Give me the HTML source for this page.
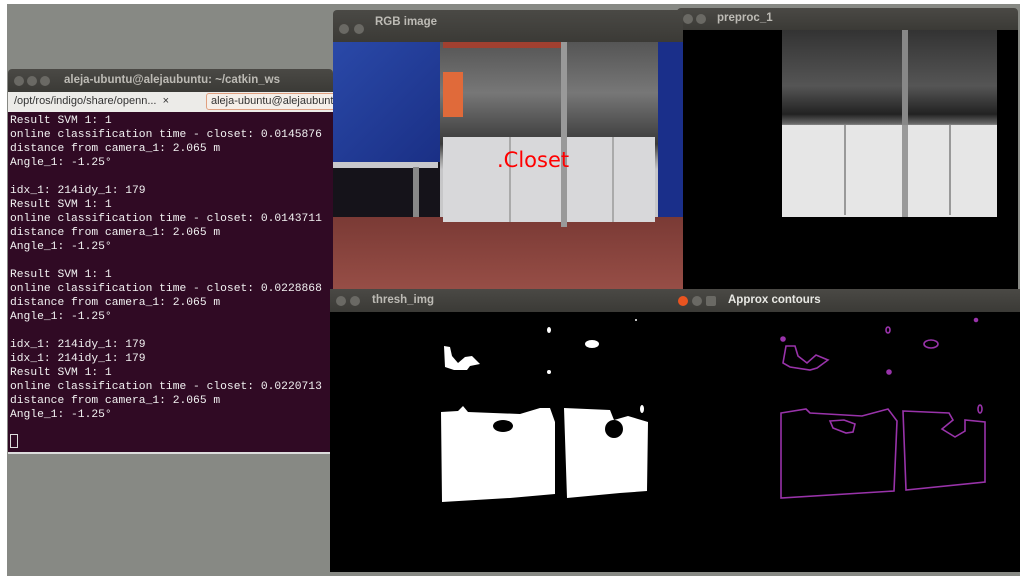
<!DOCTYPE html>
<html><head><meta charset="utf-8"><style>
*{margin:0;padding:0;box-sizing:border-box}
body{width:1024px;height:580px;background:#fff;position:relative;overflow:hidden;font-family:"Liberation Sans",sans-serif}
.a{position:absolute}
.tb{background:linear-gradient(#4a4945,#3b3a36);color:#bdbbb5;font-size:11px;font-weight:bold}
.btn{position:absolute;width:10px;height:10px;border-radius:50%;background:#6a6964;top:50%;margin-top:-5px}
pre{font-family:"Liberation Mono",monospace;font-size:11.3px;line-height:14px;color:#f2f2f2}
</style></head><body>
<div class="a" style="left:7px;top:4px;width:1013px;height:572px;background:#878984"></div>

<!-- terminal -->
<div class="a tb" style="left:8px;top:69px;width:325px;height:23px;border-radius:4px 4px 0 0">
<div class="btn" style="left:6px"></div><div class="btn" style="left:19px"></div><div class="btn" style="left:32px"></div>
<span class="a" style="left:56px;top:5px;font-size:11.5px">aleja-ubuntu@alejaubuntu: ~/catkin_ws</span></div>
<div class="a" style="left:8px;top:92px;width:325px;height:20px;background:#ecebe8;font-size:11px;color:#333">
<span class="a" style="left:6px;top:3px">/opt/ros/indigo/share/openn... &nbsp;×</span>
<span class="a" style="left:198px;top:1px;width:130px;height:17px;border:1px solid #e0a080;border-radius:3px;background:#f5efe9;padding:1px 4px;white-space:nowrap;overflow:hidden">aleja-ubuntu@alejaubuntu</span></div>
<div class="a" style="left:8px;top:112px;width:325px;height:340px;background:#300a24;overflow:hidden;padding:2px 0 0 2px">
<pre>Result SVM 1: 1
online classification time - closet: 0.0145876
distance from camera_1: 2.065 m
Angle_1: -1.25°

idx_1: 214idy_1: 179
Result SVM 1: 1
online classification time - closet: 0.0143711
distance from camera_1: 2.065 m
Angle_1: -1.25°

Result SVM 1: 1
online classification time - closet: 0.0228868
distance from camera_1: 2.065 m
Angle_1: -1.25°

idx_1: 214idy_1: 179
idx_1: 214idy_1: 179
Result SVM 1: 1
online classification time - closet: 0.0220713
distance from camera_1: 2.065 m
Angle_1: -1.25°
</pre>
<div class="a" style="left:2px;top:322px;width:8px;height:14px;border:1px solid #ddd"></div>
</div>
<div class="a" style="left:8px;top:452px;width:325px;height:2px;background:#ddd"></div>

<!-- preproc -->
<div class="a tb" style="left:677px;top:8px;width:341px;height:22px;border-radius:4px 4px 0 0">
<div class="btn" style="left:6px"></div><div class="btn" style="left:19px"></div>
<span class="a" style="left:40px;top:4px;font-size:11.5px">preproc_1</span></div>
<div class="a" style="left:677px;top:30px;width:341px;height:262px;background:#000">
<div class="a" style="left:105px;top:0;width:215px;height:187px;background:linear-gradient(#333 0,#555 30%,#222 45%,#666 50%,#bbb 52%,#ddd 60%,#eee 100%)">
<div class="a" style="left:120px;top:0;width:6px;height:187px;background:#888"></div>
<div class="a" style="left:0;top:95px;width:215px;height:92px;background:#e6e6e6"></div>
<div class="a" style="left:62px;top:95px;width:2px;height:90px;background:#999"></div>
<div class="a" style="left:120px;top:95px;width:6px;height:92px;background:#999"></div>
<div class="a" style="left:167px;top:95px;width:2px;height:90px;background:#999"></div>
</div></div>

<!-- RGB -->
<div class="a tb" style="left:333px;top:10px;width:350px;height:32px;border-radius:4px 4px 0 0">
<div class="btn" style="left:6px;margin-top:-2px"></div><div class="btn" style="left:21px;margin-top:-2px"></div>
<span class="a" style="left:42px;top:6px;font-size:11.5px">RGB image</span></div>
<div class="a" style="left:333px;top:42px;width:350px;height:248px;background:#1a2f8a;overflow:hidden">
<div class="a" style="left:0;top:0;width:110px;height:120px;background:linear-gradient(135deg,#2a49a8,#1a2f85)"></div>
<div class="a" style="left:0;top:120px;width:110px;height:100px;background:#15131a"></div>
<div class="a" style="left:0;top:120px;width:105px;height:6px;background:#c8c8cc"></div>
<div class="a" style="left:80px;top:125px;width:6px;height:95px;background:#888"></div>
<div class="a" style="left:107px;top:0;width:218px;height:255px;background:linear-gradient(#555 0,#777 20%,#3a3a3a 40%,#999 46%,#c6c6c8 50%,#ccc 100%)"></div>
<div class="a" style="left:110px;top:0;width:120px;height:6px;background:#a04030"></div>
<div class="a" style="left:110px;top:30px;width:20px;height:45px;background:#e06a3a"></div>
<div class="a" style="left:0;top:175px;width:350px;height:80px;background:linear-gradient(#7a3a35,#9a5048)"></div>
<div class="a" style="left:110px;top:95px;width:212px;height:85px;background:#d8d8da"></div>
<div class="a" style="left:176px;top:95px;width:2px;height:85px;background:#aaa"></div>
<div class="a" style="left:228px;top:0;width:6px;height:185px;background:#999"></div>
<div class="a" style="left:279px;top:95px;width:2px;height:85px;background:#aaa"></div>
<span class="a" style="left:164px;top:106px;color:#f00;font-size:21px;font-family:'DejaVu Sans',sans-serif">.Closet</span>
</div>

<!-- thresh -->
<div class="a tb" style="left:330px;top:289px;width:345px;height:23px">
<div class="btn" style="left:6px"></div><div class="btn" style="left:20px"></div>
<span class="a" style="left:42px;top:5px;font-size:11.5px">thresh_img</span></div>
<div class="a" style="left:330px;top:312px;width:345px;height:260px;background:#000">
<svg width="345" height="260" style="position:absolute;left:0;top:0">
<path d="M114 34 L120 35 L122 44 L128 51 L135 45 L142 44 L150 52 L140 54 L137 58 L124 58 L115 55Z" fill="#fff"/>
<ellipse cx="262" cy="32" rx="7" ry="4" fill="#fff"/>
<ellipse cx="219" cy="18" rx="2" ry="3" fill="#fff"/>
<ellipse cx="219" cy="60" rx="2" ry="2" fill="#fff"/>
<circle cx="306" cy="8" r="1" fill="#fff"/>
<path d="M111 100 L128 99 L133 94 L138 100 L190 102 L210 96 L220 96 L225 110 L225 182 L180 186 L112 190Z" fill="#fff"/>
<ellipse cx="173" cy="114" rx="10" ry="6" fill="#000"/>
<path d="M234 96 L280 98 L284 108 L298 104 L318 110 L317 179 L290 181 L237 186Z" fill="#fff"/>
<circle cx="284" cy="117" r="9" fill="#000"/>
<ellipse cx="312" cy="97" rx="2" ry="4" fill="#fff"/>
</svg></div>

<!-- contours -->
<div class="a tb" style="left:674px;top:289px;width:346px;height:23px">
<div class="btn" style="left:4px;background:#e95420"></div><div class="btn" style="left:18px"></div><div class="btn" style="left:32px;border-radius:2px"></div>
<span class="a" style="left:54px;top:5px;font-size:11.5px;color:#e8e8e4">Approx contours</span></div>
<div class="a" style="left:674px;top:312px;width:346px;height:260px;background:#000;overflow:hidden">
<svg width="346" height="260" style="position:absolute;left:-5px;top:0" fill="none" stroke="#9933aa" stroke-width="1.6">
<path d="M117 34 L126 34 L129 44 L138 51 L147 43 L159 48 L148 56 L141 58 L121 55 L114 51Z"/>
<ellipse cx="262" cy="32" rx="7" ry="4"/>
<ellipse cx="219" cy="18" rx="2" ry="3"/>
<circle cx="220" cy="60" r="2" fill="#9933aa"/>
<circle cx="114" cy="27" r="2" fill="#9933aa"/>
<circle cx="307" cy="8" r="1.5" fill="#9933aa"/>
<path d="M112 101 L137 97 L141 101 L193 104 L219 97 L228 109 L225 179 L112 186Z"/>
<path d="M161 109 L175 108 L186 112 L184 120 L177 121 L164 116Z"/>
<path d="M234 99 L280 101 L284 108 L273 117 L286 125 L296 119 L296 108 L316 110 L316 170 L237 178Z"/>
<ellipse cx="311" cy="97" rx="2" ry="4"/>
</svg></div>
</body></html>
